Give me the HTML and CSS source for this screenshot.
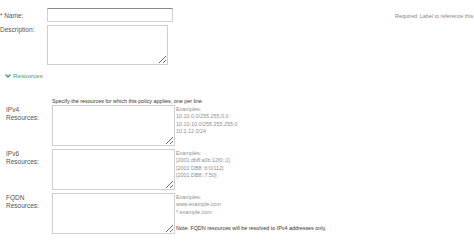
FILE: index.html
```html
<!DOCTYPE html>
<html>
<head>
<meta charset="utf-8">
<link rel="stylesheet" href="styles.css">
</head>
<body>
<div class="page">
  <div class="row name-row">
    <label class="lbl">* Name:</label>
    <input class="name-input" type="text">
    <span class="hint">Required: Label to reference this</span>
  </div>
  <div class="row desc-row">
    <label class="lbl">Description:</label>
    <textarea class="desc-input"></textarea>
  </div>
  <div class="section-toggle">
    <svg class="chev" width="6" height="4" viewBox="0 0 6 4"><path d="M0.5 0.5 L3 3 L5.5 0.5" fill="none" stroke="#3c9e5a" stroke-width="1.3"/></svg>
    <span>Resources</span>
  </div>
  <div class="res">
    <div class="intro">Specify the resources for which this policy applies, one per line.</div>
    <div class="res-row">
      <label class="rlbl">IPv4<br>Resources:</label>
      <textarea class="res-input"></textarea>
      <div class="examples">
        <div>Examples:</div>
        <div>10.10.0.0/255.255.0.0</div>
        <div>10.10.10.0/255.255.255.0</div>
        <div>10.2.12.0/24</div>
      </div>
    </div>
    <div class="res-row">
      <label class="rlbl">IPv6<br>Resources:</label>
      <textarea class="res-input"></textarea>
      <div class="examples">
        <div>Examples:</div>
        <div>[2001:db8:a0b:12f0::1]</div>
        <div>[2001:DB8::6:0/112]</div>
        <div>[2001:DB8::7:50]</div>
      </div>
    </div>
    <div class="res-row">
      <label class="rlbl">FQDN<br>Resources:</label>
      <textarea class="res-input"></textarea>
      <div class="examples">
        <div>Examples:</div>
        <div>www.example.com</div>
        <div>*.example.com</div>
        <div class="note">Note: FQDN resources will be resolved to IPv4 addresses only.</div>
      </div>
    </div>
  </div>
</div>
</body>
</html>
```

FILE: styles.css
```css
html, body {
  margin: 0;
  padding: 0;
  background: #ffffff;
  overflow: hidden;
}
body {
  width: 474px;
  height: 245px;
  font-family: "Liberation Sans", Arial, sans-serif;
  font-size: 6.5px;
  color: #555;
}
.page {
  padding-top: 8px;
}
.row {
  display: flex;
  align-items: flex-start;
  white-space: nowrap;
}
.lbl {
  width: 47px;
  flex: none;
  color: #555;
  line-height: 8px;
}
.name-row .lbl {
  padding-top: 4px;
}
.name-input {
  box-sizing: border-box;
  width: 126px;
  height: 14px;
  margin: 0;
  border: 1px solid #cfcfcf;
  border-top-color: #8a8a8a;
  padding: 0;
  flex: none;
}
.hint {
  margin-left: 222px;
  padding-top: 4px;
  line-height: 8px;
  font-size: 5.4px;
  color: #888;
  flex: none;
}
.desc-row {
  margin-top: 3px;
}
.desc-row .lbl {
  padding-top: 1px;
}
textarea {
  box-sizing: border-box;
  margin: 0;
  padding: 0;
  border: 1px solid #cfcfcf;
  resize: both;
  font: inherit;
  flex: none;
}
.desc-input {
  width: 121px;
  height: 40px;
}
.section-toggle {
  display: flex;
  align-items: center;
  gap: 2px;
  margin-top: 7px;
  padding-left: 5px;
  color: #3c9e5a;
  font-size: 6.2px;
  line-height: 8px;
}
.res {
  margin-top: 17px;
  padding-left: 6px;
}
.intro {
  margin-left: 46px;
  color: #333;
  font-size: 5.4px;
  line-height: 8px;
  white-space: nowrap;
}
.res-row {
  display: flex;
  align-items: flex-start;
  margin-bottom: 3px;
  white-space: nowrap;
}
.rlbl {
  width: 46px;
  flex: none;
  padding-top: 1px;
  line-height: 8px;
  color: #555;
}
.res-input {
  width: 123px;
  height: 41px;
}
.examples {
  margin-left: 1px;
  padding-top: 0.5px;
  font-size: 5.4px;
  line-height: 7.6px;
  color: #8f8f8f;
}
.note {
  margin-top: 9px;
  color: #333;
}
```
